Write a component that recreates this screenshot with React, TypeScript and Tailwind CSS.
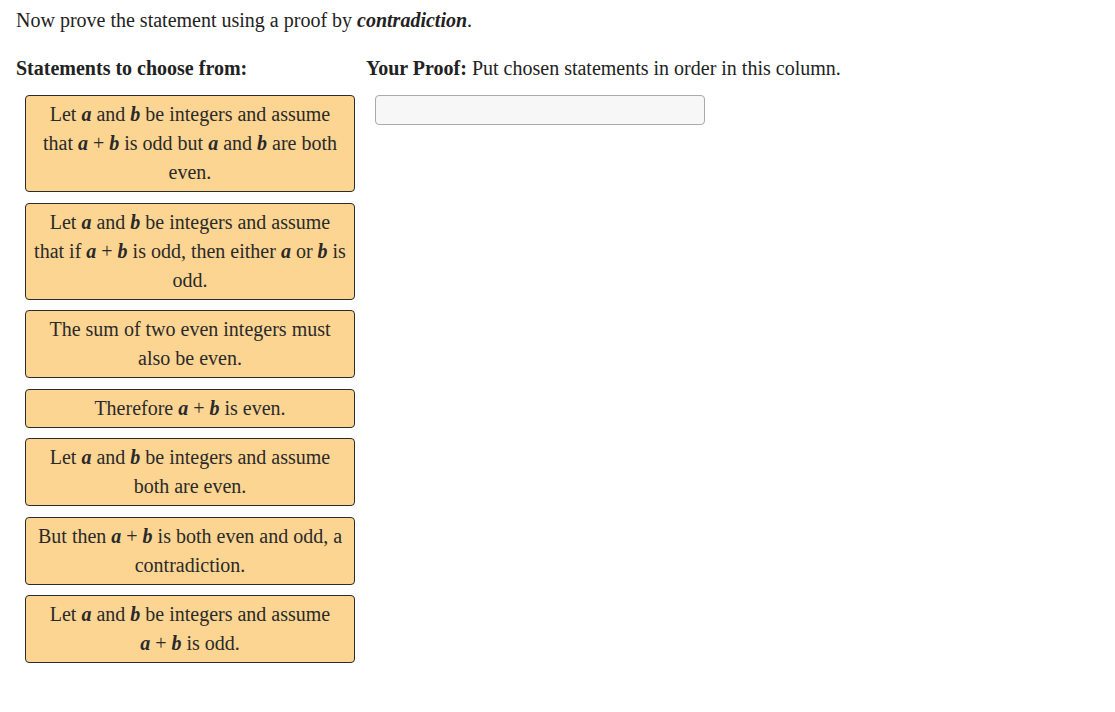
import React from "react";

const M = ({ children }: { children: React.ReactNode }) => (
  <span className="italic font-bold">{children}</span>
);
const Plus = () => <span className="mx-[5px]">+</span>;

const cards: React.ReactNode[] = [
  <>
    Let <M>a</M> and <M>b</M> be integers and assume
    <br />
    that <M>a</M>
    <Plus />
    <M>b</M> is odd but <M>a</M> and <M>b</M> are both
    <br />
    even.
  </>,
  <>
    Let <M>a</M> and <M>b</M> be integers and assume
    <br />
    that if <M>a</M>
    <Plus />
    <M>b</M> is odd, then either <M>a</M> or <M>b</M> is
    <br />
    odd.
  </>,
  <>
    The sum of two even integers must
    <br />
    also be even.
  </>,
  <>
    Therefore <M>a</M>
    <Plus />
    <M>b</M> is even.
  </>,
  <>
    Let <M>a</M> and <M>b</M> be integers and assume
    <br />
    both are even.
  </>,
  <>
    But then <M>a</M>
    <Plus />
    <M>b</M> is both even and odd, a
    <br />
    contradiction.
  </>,
  <>
    Let <M>a</M> and <M>b</M> be integers and assume
    <br />
    <M>a</M>
    <Plus />
    <M>b</M> is odd.
  </>,
];

export default function App() {
  return (
    <div
      className="w-[1115px] h-[712px] bg-white text-[#222] text-[20px] leading-[29px] px-4 pt-[6px]"
      style={{ fontFamily: '"Liberation Serif", "DejaVu Serif", serif' }}
    >
      <p>
        Now prove the statement using a proof by <span className="italic font-bold">contradiction</span>.
      </p>
      <div className="flex mt-[19px]">
        <div className="w-[350px] shrink-0">
          <div className="font-bold">Statements to choose from:</div>
          <div className="flex flex-col gap-[10.5px] mt-[12px] ml-[9px] w-[330px]">
            {cards.map((c, i) => (
              <div
                key={i}
                className="bg-[#fdd592] border border-[#2b2b2b] rounded-[4px] py-[4px] text-center whitespace-nowrap text-[#2a2a2a]"
              >
                {c}
              </div>
            ))}
          </div>
        </div>
        <div className="flex-1">
          <div>
            <span className="font-bold">Your Proof:</span> Put chosen statements in order in this column.
          </div>
          <div className="mt-[12px] ml-[9px] w-[330px] h-[30px] bg-[#f7f7f7] border border-[#aaaaaa] rounded-[4px]" />
        </div>
      </div>
    </div>
  );
}
